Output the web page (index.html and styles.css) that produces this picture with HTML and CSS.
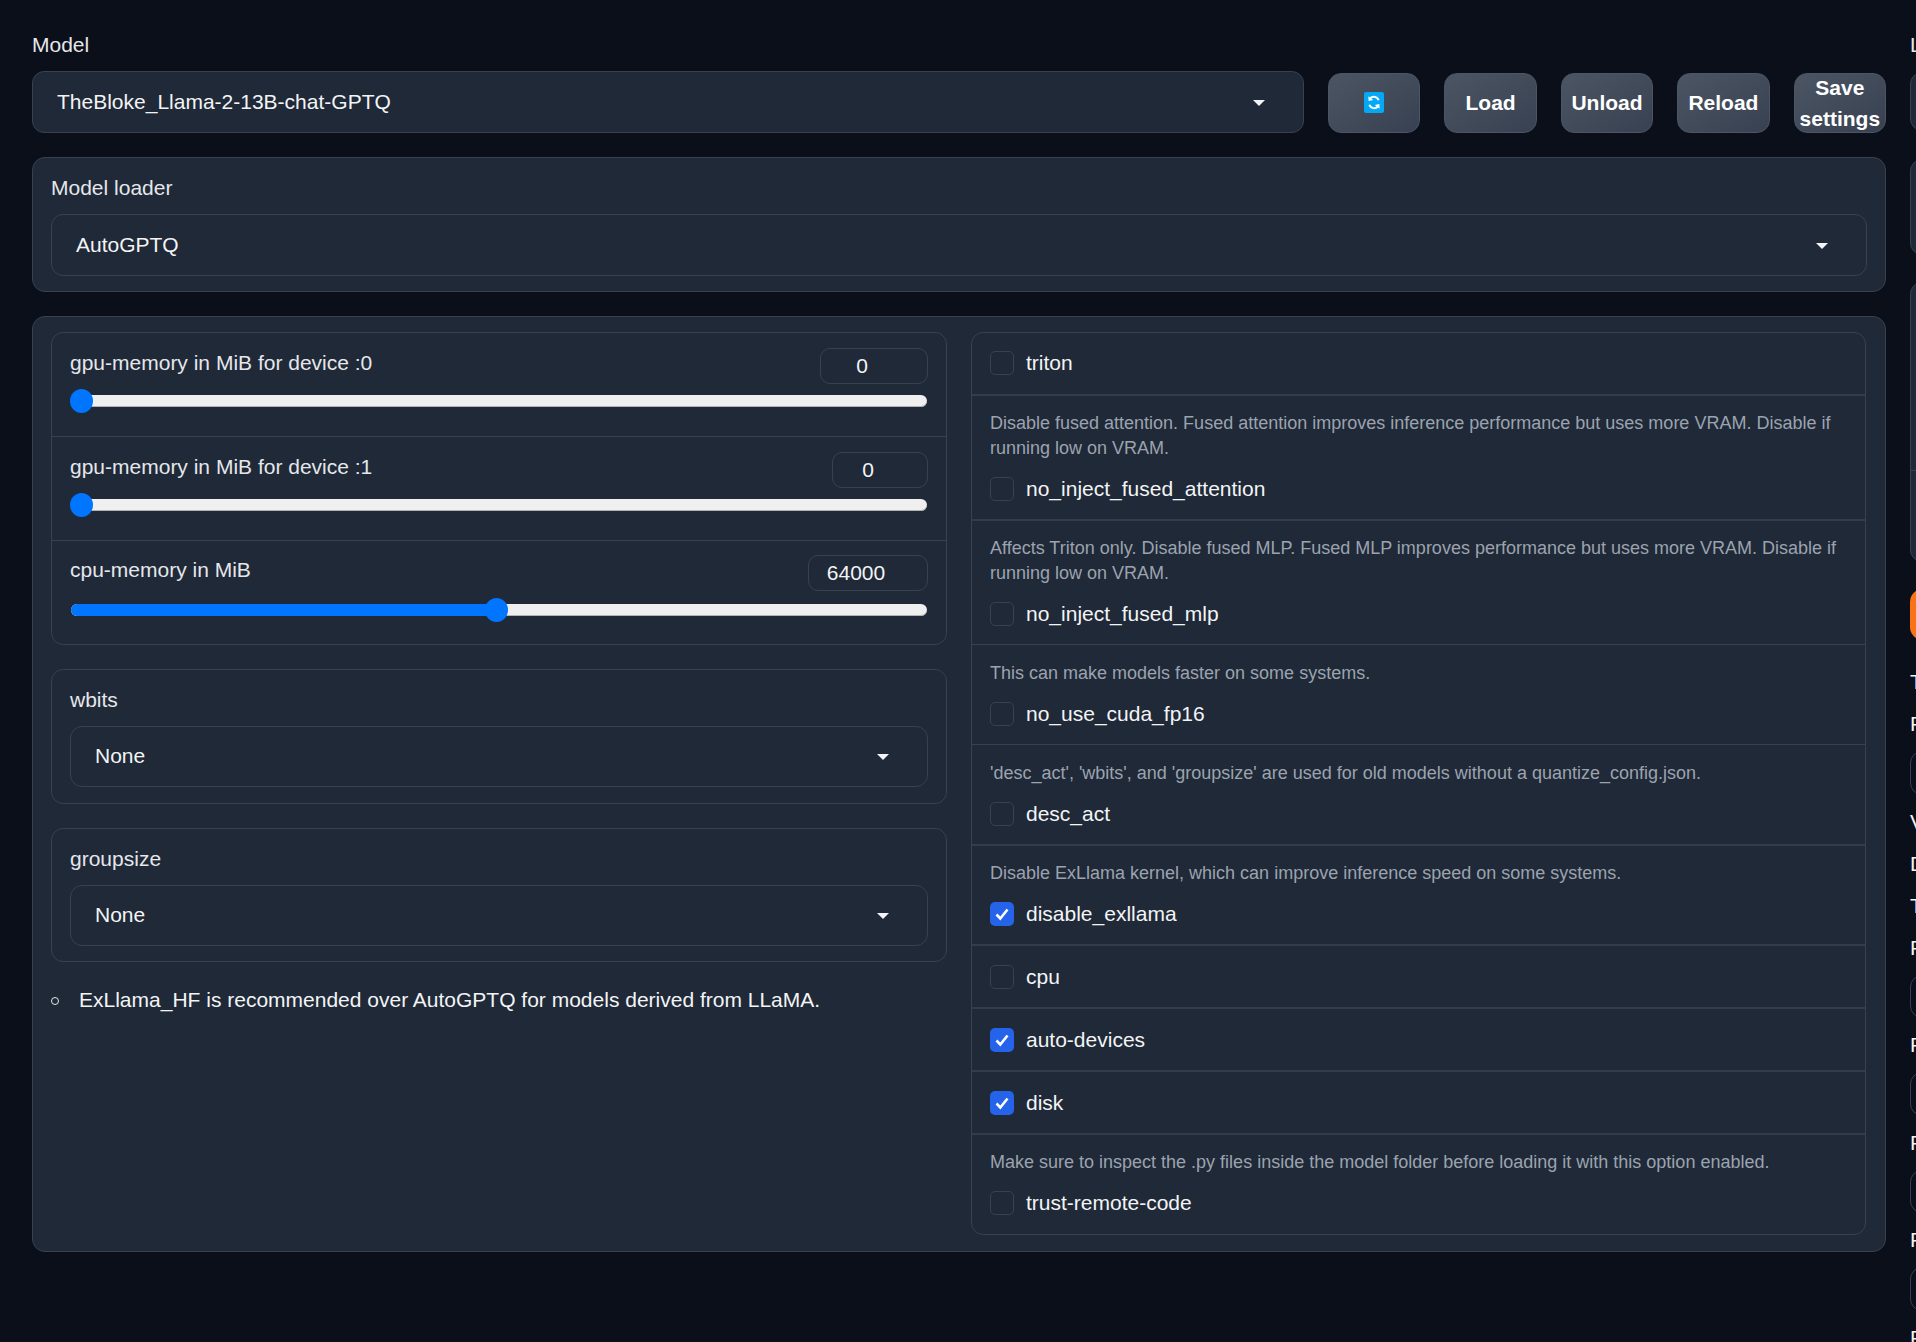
FILE: index.html
```html
<!DOCTYPE html>
<html lang="en">
<head>
<meta charset="utf-8">
<title>Model</title>
<link rel="stylesheet" href="styles.css">
</head>
<body>
<div class="page">
  <main class="main">
    <div class="field-label top-label">Model</div>
    <div class="model-row">
      <div class="select model-select"><span>TheBloke_Llama-2-13B-chat-GPTQ</span><i class="tri"></i></div>
      <button class="btn"><svg class="refresh" viewBox="0 0 20 21" aria-hidden="true"><rect width="20" height="21" rx="2" fill="#03a9f4"/><path d="M14.6 8.2A5 5 0 0 0 6 6.6" fill="none" stroke="#fff" stroke-width="2"/><path d="M4.4 4.2l.2 4.8 4.6-.9z" fill="#fff"/><path d="M5.4 12.8A5 5 0 0 0 14 14.4" fill="none" stroke="#fff" stroke-width="2"/><path d="M15.6 16.8l-.2-4.8-4.6.9z" fill="#fff"/></svg></button>
      <button class="btn">Load</button>
      <button class="btn">Unload</button>
      <button class="btn">Reload</button>
      <button class="btn"><span class="btn-lines">Save settings</span></button>
    </div>

    <section class="block loader-block">
      <div class="field-label">Model loader</div>
      <div class="select"><span>AutoGPTQ</span><i class="tri"></i></div>
    </section>

    <section class="block settings">
      <div class="col-left">
        <div class="inner-box sliders">
          <div class="slider-row">
            <div class="slider-head"><span class="field-label">gpu-memory in MiB for device :0</span><div class="num num-a">0</div></div>
            <div class="track"><div class="fill" style="width:0%"></div><div class="thumb" style="left:0%"></div></div>
          </div>
          <div class="slider-row">
            <div class="slider-head"><span class="field-label">gpu-memory in MiB for device :1</span><div class="num num-b">0</div></div>
            <div class="track"><div class="fill" style="width:0%"></div><div class="thumb" style="left:0%"></div></div>
          </div>
          <div class="slider-row">
            <div class="slider-head"><span class="field-label">cpu-memory in MiB</span><div class="num num-c">64000</div></div>
            <div class="track"><div class="fill" style="width:49.8%"></div><div class="thumb" style="left:48.5%"></div></div>
          </div>
        </div>

        <div class="inner-box select-box">
          <div class="field-label">wbits</div>
          <div class="select"><span>None</span><i class="tri"></i></div>
        </div>
        <div class="inner-box select-box">
          <div class="field-label">groupsize</div>
          <div class="select"><span>None</span><i class="tri"></i></div>
        </div>

        <ul class="notes"><li>ExLlama_HF is recommended over AutoGPTQ for models derived from LLaMA.</li></ul>
      </div>

      <div class="col-right inner-box">
        <div class="opt"><label class="check"><i class="box"></i>triton</label></div>
        <div class="opt opt-thick"><p class="desc">Disable fused attention. Fused attention improves inference performance but uses more VRAM. Disable if running low on VRAM.</p><label class="check"><i class="box"></i>no_inject_fused_attention</label></div>
        <div class="opt opt-thick"><p class="desc">Affects Triton only. Disable fused MLP. Fused MLP improves performance but uses more VRAM. Disable if running low on VRAM.</p><label class="check"><i class="box"></i>no_inject_fused_mlp</label></div>
        <div class="opt"><p class="desc">This can make models faster on some systems.</p><label class="check"><i class="box"></i>no_use_cuda_fp16</label></div>
        <div class="opt"><p class="desc">'desc_act', 'wbits', and 'groupsize' are used for old models without a quantize_config.json.</p><label class="check"><i class="box"></i>desc_act</label></div>
        <div class="opt opt-thick"><p class="desc">Disable ExLlama kernel, which can improve inference speed on some systems.</p><label class="check"><i class="box on"><svg viewBox="0 0 24 24" aria-hidden="true"><path d="M6.5 12.5l3.8 4 7.2-9" fill="none" stroke="#fff" stroke-width="2.6"/></svg></i>disable_exllama</label></div>
        <div class="opt opt-thick opt-single"><label class="check"><i class="box"></i>cpu</label></div>
        <div class="opt opt-thick opt-single"><label class="check"><i class="box on"><svg viewBox="0 0 24 24" aria-hidden="true"><path d="M6.5 12.5l3.8 4 7.2-9" fill="none" stroke="#fff" stroke-width="2.6"/></svg></i>auto-devices</label></div>
        <div class="opt opt-thick opt-single"><label class="check"><i class="box on"><svg viewBox="0 0 24 24" aria-hidden="true"><path d="M6.5 12.5l3.8 4 7.2-9" fill="none" stroke="#fff" stroke-width="2.6"/></svg></i>disk</label></div>
        <div class="opt opt-thick"><p class="desc">Make sure to inspect the .py files inside the model folder before loading it with this option enabled.</p><label class="check"><i class="box"></i>trust-remote-code</label></div>
      </div>
    </section>
  </main>

  <aside class="side">
    <div class="field-label top-label">L</div>
    <div class="side-box box-a"></div>
    <div class="side-box box-b"></div>
    <div class="side-box box-c"><div class="box-c-split"></div></div>
    <div class="orange"></div>
    <div class="side-list">
      <div class="side-text">T</div>
      <div class="side-text">F</div>
      <div class="side-box input"></div>
      <div class="side-text">V</div>
      <div class="side-text">D</div>
      <div class="side-text">T</div>
      <div class="side-text">F</div>
      <div class="side-box input"></div>
      <div class="side-text">F</div>
      <div class="side-box input"></div>
      <div class="side-text">F</div>
      <div class="side-box input"></div>
      <div class="side-text">F</div>
      <div class="side-box input"></div>
      <div class="side-text">F</div>
    </div>
  </aside>
</div>
</body>
</html>
```

FILE: styles.css
```css
* { box-sizing: border-box; }

html, body {
  margin: 0;
  height: 1342px;
  overflow: hidden;
  background: #0b0f19;
}

body {
  font-family: "Liberation Sans", Arial, sans-serif;
  font-size: 21px;
  color: #f3f4f6;
}

.page {
  display: grid;
  grid-template-columns: 1854px 60px;
  column-gap: 24px;
  width: 1916px;
  height: 1342px;
  padding-left: 32px;
  overflow: hidden;
}

.field-label {
  line-height: 30px;
  color: #e5e7eb;
}

.top-label {
  padding-top: 30px;
  height: 71px;
}

.model-row {
  display: flex;
  align-items: flex-end;
  gap: 24px;
  height: 62px;
}

.select {
  display: flex;
  align-items: center;
  justify-content: space-between;
  height: 61.5px;
  padding: 0 38px 0 24px;
  border: 1px solid #374151;
  border-radius: 12px;
  background: #1f2937;
  color: #f3f4f6;
}

.model-select {
  flex: 0 0 1272px;
  align-self: flex-start;
  height: 62px;
}

.tri {
  width: 0;
  height: 0;
  margin-top: 2px;
  border-left: 6px solid transparent;
  border-right: 6px solid transparent;
  border-top: 6px solid #f3f4f6;
}

.btn {
  flex: 1 1 0;
  height: 60px;
  padding: 0 4px;
  border: 1px solid #4b5563;
  border-radius: 13px;
  background: linear-gradient(to bottom right, #4b5563, #374151);
  color: #fff;
  font: bold 21px/31.4px "Liberation Sans", Arial, sans-serif;
}

.btn-lines {
  display: block;
  margin-top: -2px;
}

.refresh {
  display: block;
  width: 20px;
  height: 21px;
  margin: -2px auto 0;
}

.block {
  margin-top: 24px;
  border: 1px solid #374151;
  border-radius: 13px;
  background: #1f2937;
}

.loader-block {
  height: 135px;
  padding: 15px 18px 0;
}

.loader-block .field-label,
.select-box .field-label {
  margin-bottom: 11px;
}

.settings {
  display: grid;
  grid-template-columns: 896px 895px;
  column-gap: 24px;
  height: 935.5px;
  padding: 15px 18px 0;
}

.inner-box {
  border: 1px solid #374151;
  border-radius: 12px;
  background: #1f2937;
}

.col-left {
  display: flex;
  flex-direction: column;
  gap: 24px;
}

.sliders {
  height: 312.5px;
}

.slider-row {
  height: 104px;
  padding: 15px 18px 0;
  border-top: 1px solid #374151;
}

.slider-row:first-child {
  height: 103px;
  border-top: 0;
}

.slider-row:last-child {
  padding-top: 14px;
}

.slider-row:last-child .track {
  margin-top: 13px;
}

.slider-head {
  display: flex;
  justify-content: space-between;
  align-items: flex-start;
  height: 36px;
}

.num {
  height: 36px;
  padding: 0 36px 0 12px;
  border: 1px solid #374151;
  border-radius: 10px;
  line-height: 34px;
  text-align: center;
  color: #f3f4f6;
}

.num-a { width: 108px; }
.num-b { width: 96px; }
.num-c { width: 120px; }

.track {
  position: relative;
  height: 12px;
  margin: 11px 1px 0;
  border-radius: 6px;
  background: #efefef;
  box-shadow: inset 0 -1px 0 #b2b2b2;
}

.fill {
  height: 12px;
  border-radius: 6px 0 0 6px;
  background: #0075ff;
}

.thumb {
  position: absolute;
  top: -6px;
  width: 23px;
  height: 24px;
  margin-left: -1px;
  border-radius: 50%;
  background: #0075ff;
}

.select-box {
  padding: 15px 18px 0;
}

.select-box:nth-of-type(2) {
  height: 135px;
}

.select-box:nth-of-type(3) {
  height: 134px;
}

.notes {
  margin: -1px 0 0;
  padding: 0 0 0 28px;
  line-height: 30px;
  list-style: none;
  color: #f3f4f6;
}

.notes li {
  position: relative;
}

.notes li::before {
  content: "";
  position: absolute;
  left: -28px;
  top: 12px;
  width: 6px;
  height: 6px;
  border: 1px solid #e5e7eb;
  border-radius: 50%;
}

.col-right {
  height: 903px;
}

.opt {
  padding: 16px 18px 18px;
  border-top: 1px solid #374151;
}

.opt:first-child {
  padding: 18px 18px 19px;
  border-top: 0;
}

.opt-thick {
  padding-top: 15px;
  border-top-width: 2px;
  border-top-color: #323c4b;
}

.opt-single {
  padding: 19px 18px 18px;
}

.desc {
  margin: 0 0 16px;
  font-size: 18px;
  line-height: 25px;
  color: #9ca3af;
}

.check {
  display: flex;
  align-items: center;
  gap: 12px;
  height: 24px;
  color: #f3f4f6;
}

.box {
  flex: 0 0 24px;
  width: 24px;
  height: 24px;
  border: 1px solid #374151;
  border-radius: 5px;
}

.box.on {
  border: 0;
  background: #2563eb;
}

.box svg {
  display: block;
  width: 24px;
  height: 24px;
}

.side {
  display: flex;
  flex-direction: column;
}

.side-box {
  border: 1px solid #374151;
  border-radius: 12px;
}

.box-a {
  height: 59px;
  margin-top: 1px;
  background: #1f2937;
}

.box-b {
  height: 96px;
  margin-top: 28px;
  background: #1f2937;
}

.box-c {
  height: 280px;
  margin-top: 27px;
  background: #1f2937;
}

.box-c-split {
  height: 188px;
  border-bottom: 1px solid #374151;
}

.orange {
  height: 51px;
  margin-top: 27px;
  border-radius: 13px;
  background: #f97316;
}

.side-list {
  display: flex;
  flex-direction: column;
  gap: 12px;
  margin-top: 27px;
}

.side-text {
  flex: none;
  height: 30px;
  line-height: 30px;
}

.input {
  flex: none;
  height: 43.5px;
}
```
